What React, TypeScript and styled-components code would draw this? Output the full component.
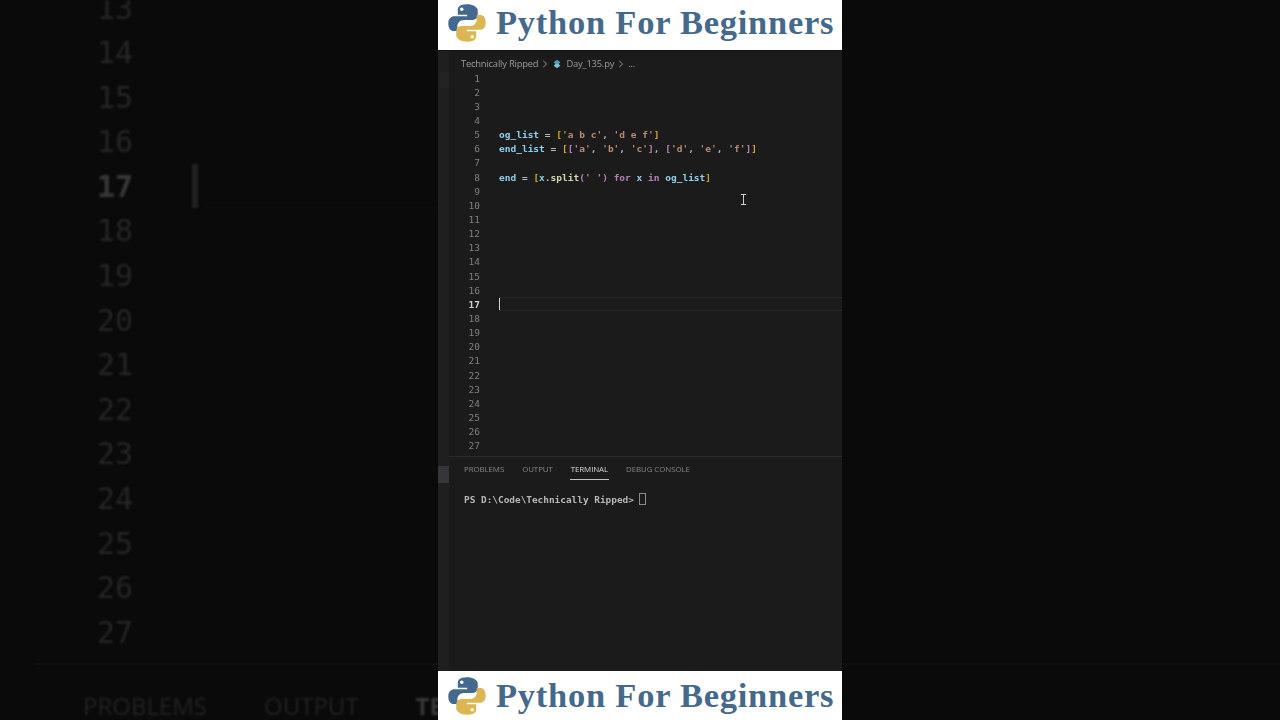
import React from 'react';
import styled, { createGlobalStyle } from 'styled-components';

const vars = {
  mono: '"DejaVu Sans Mono", "Liberation Mono", monospace',
  ui: '"Open Sans", "Liberation Sans", sans-serif',
  serif: '"Liberation Serif", serif',
  blue: '#8fcfee',
  gold: '#d0a230',
  pink: '#b97fb5',
  orange: '#b98a72',
  plain: '#b8b8b8',
};

const GlobalStyle = createGlobalStyle`
  html, body {
    margin: 0;
    height: 100%;
    background: #0a0a0a;
  }
  #root {
    height: 100%;
  }
`;

const Page = styled.main`
  display: flex;
  width: 1280px;
  height: 720px;
  overflow: hidden;
  background: #0a0a0a;
`;

// blurred, darkened copy of the video either side of the short
const Backdrop = styled.aside`
  display: flex;
  flex-direction: column;
  flex: 0 0 438px;
  height: 720px;
  overflow: hidden;
`;

const GhostBody = styled.div`
  display: flex;
  flex-direction: column;
  height: 663px;
  flex: none;
  overflow: hidden;
  margin-left: 36px;
  filter: blur(1.1px);
`;

const GhostRow = styled.div<{ $first?: boolean }>`
  display: flex;
  align-items: center;
  flex: none;
  height: 44.6px;
  margin-top: ${(p) => (p.$first ? '-14.3px' : '0')};
`;

const GhostNumber = styled.span<{ $active?: boolean }>`
  flex: 0 0 36px;
  margin-left: 61px;
  font: ${(p) => (p.$active ? 700 : 400)} 30px ${vars.mono};
  letter-spacing: -0.1px;
  color: ${(p) => (p.$active ? '#383838' : '#262626')};
`;

const GhostCaret = styled.span`
  width: 6px;
  height: 44px;
  margin-left: 59px;
  background: #222222;
`;

const GhostLine = styled.span`
  flex: 1;
  height: 44px;
  margin-left: 6px;
  box-sizing: border-box;
  border-top: 1px solid #0d0d0d;
  border-bottom: 1px solid #111111;
`;

const GhostDivider = styled.div<{ $inset?: boolean }>`
  flex: none;
  height: 2px;
  margin-left: ${(p) => (p.$inset ? '36px' : '0')};
  background: #111111;
`;

const GhostTabs = styled.div`
  display: flex;
  align-items: center;
  gap: 57px;
  height: 55px;
  padding: 24px 0 0 83px;
  white-space: nowrap;
  filter: blur(1.1px);
  font: 400 24px ${vars.ui};
  color: #222222;
`;

const GhostTab = styled.span<{ $active?: boolean }>`
  flex: none;
  font-weight: ${(p) => (p.$active ? 700 : 400)};
  color: ${(p) => (p.$active ? '#383838' : '#222222')};
`;

const Screen = styled.section`
  position: relative;
  display: flex;
  flex-direction: column;
  flex: 0 0 404px;
  height: 720px;
  overflow: hidden;
  background: #1b1b1b;
`;

const Banner = styled.header<{ $bottom?: boolean }>`
  display: flex;
  align-items: center;
  flex: none;
  gap: 10px;
  box-sizing: border-box;
  height: ${(p) => (p.$bottom ? '49px' : '51px')};
  padding: ${(p) => (p.$bottom ? '0 0 0 10px' : '0 0 5px 10px')};
  background: #ffffff;
  border-bottom: ${(p) => (p.$bottom ? 'none' : '1px solid #111111')};
`;

const BannerTitle = styled.h1`
  margin: 0;
  font: 700 34.5px ${vars.serif};
  letter-spacing: 0.75px;
  white-space: nowrap;
  color: #44698b;
`;

const Workbench = styled.div`
  display: flex;
  flex: 1;
  min-height: 0;
`;

const ActivityBar = styled.nav`
  display: flex;
  flex-direction: column;
  flex: 0 0 11px;
  background: #1f1f1f;
`;

const ActivityItem = styled.span<{ $lit?: boolean }>`
  height: ${(p) => (p.$lit ? '17px' : '16px')};
  margin-top: ${(p) => (p.$lit ? '378px' : '21px')};
  background: ${(p) => (p.$lit ? '#36363a' : '#232323')};
`;

const Main = styled.div`
  display: flex;
  flex-direction: column;
  flex: 1;
  min-width: 0;
`;

const Breadcrumbs = styled.div`
  display: flex;
  align-items: center;
  flex: none;
  gap: 4px;
  height: 20px;
  padding: 5px 0 0 12px;
  box-sizing: border-box;
  font: 400 9.4px ${vars.ui};
  letter-spacing: -0.2px;
  color: #9c9c9c;
  filter: blur(0.45px);
`;

const Editor = styled.div`
  flex: none;
  height: 385px;
  filter: blur(0.5px);
`;

const Line = styled.div`
  display: flex;
  align-items: center;
  height: 14.15px;
`;

const LineNumber = styled.span<{ $active?: boolean }>`
  flex: 0 0 31px;
  text-align: right;
  font: ${(p) => (p.$active ? 700 : 400)} 9.5px ${vars.mono};
  color: ${(p) => (p.$active ? '#d0d0d0' : '#808080')};
`;

const Code = styled.code`
  margin-left: 19px;
  white-space: pre;
  font: 700 9.52px ${vars.mono};
  color: ${vars.plain};
`;

const Tok = styled.span<{ $c: string }>`
  color: ${(p) => p.$c};
`;

const CurrentLine = styled.div`
  display: flex;
  flex: 1;
  align-self: stretch;
  margin-left: 19px;
  box-sizing: border-box;
  border-top: 1px solid #252525;
  border-bottom: 1px solid #252525;
`;

const TextCaret = styled.span`
  width: 1px;
  background: #d0d0d0;
`;

const Panel = styled.div`
  display: flex;
  flex-direction: column;
  flex: 1;
  border-top: 1px solid #2a2a2a;
`;

const PanelTabs = styled.div`
  display: flex;
  flex: none;
  gap: 16px;
  height: 23px;
  padding-left: 14px;
  filter: blur(0.4px);
`;

const PanelTab = styled.span<{ $active?: boolean }>`
  display: flex;
  align-items: center;
  box-sizing: border-box;
  padding: 1px 1px 0;
  font: 400 7.9px ${vars.ui};
  letter-spacing: -0.08px;
  color: ${(p) => (p.$active ? '#d8d8d8' : '#858585')};
  border-bottom: 1px solid ${(p) => (p.$active ? '#c0c0c0' : 'transparent')};
`;

const Terminal = styled.div`
  display: flex;
  align-items: center;
  gap: 5px;
  margin-top: 12px;
  padding-left: 15px;
  height: 14px;
  font: 700 9.42px ${vars.mono};
  color: #b8b8b8;
  white-space: pre;
  filter: blur(0.4px);
`;

const TerminalCursor = styled.span`
  width: 7px;
  height: 12px;
  box-sizing: border-box;
  border: 1px solid #8a8a8a;
`;

// the mouse pointer sits on top of the editor
const MouseCursor = styled.svg`
  position: absolute;
  left: 302px;
  top: 194px;
`;

const PythonLogo: React.FC<{ size: number }> = ({ size }) => {
  const half =
    'M11.8.2C6.9.2 6.2 2.2 6.2 3.8V6.8h5.9v.9H4C2 7.7.2 9 .2 12.2c0 3.4 1.5 4.9 3.4 4.9h2.3v-3c0-2.2 1.9-4 4.1-4h5.6c1.8 0 3.2-1.5 3.2-3.3V3.6C18 1.8 16 .2 11.8.2z';
  return (
    <svg width={size} height={size} viewBox="0 0 24 24" style={{ flex: 'none' }}>
      <path d={half} fill="#44698f" />
      <circle cx="8.7" cy="3.3" r="1.1" fill="#ffffff" />
      <g transform="rotate(180 12 12)">
        <path d={half} fill="#dcb653" />
        <circle cx="8.7" cy="3.3" r="1.1" fill="#ffffff" />
      </g>
    </svg>
  );
};

const Chevron: React.FC = () => (
  <svg width="6" height="8" viewBox="0 0 6 8" fill="none" stroke="#a0a0a0" strokeWidth="0.9">
    <path d="M1.2 .8 4.6 4 1.2 7.2" />
  </svg>
);

const PyFileIcon: React.FC = () => (
  <svg width="10" height="10" viewBox="0 0 24 24">
    <path d="M12 2 4 8l4 4h8l4-4z" fill="#4f9fc4" />
    <path d="M4 16l4-4h8l4 4-8 6z" fill="#7cc4dd" />
  </svg>
);

const { blue, gold, pink, orange } = vars;

const code: Record<number, React.ReactNode> = {
  5: (
    <>
      <Tok $c={blue}>og_list</Tok> = <Tok $c={gold}>[</Tok>
      <Tok $c={orange}>'a b c'</Tok>, <Tok $c={orange}>'d e f'</Tok>
      <Tok $c={gold}>]</Tok>
    </>
  ),
  6: (
    <>
      <Tok $c={blue}>end_list</Tok> = <Tok $c={gold}>[</Tok>
      <Tok $c={pink}>[</Tok>
      <Tok $c={orange}>'a'</Tok>, <Tok $c={orange}>'b'</Tok>, <Tok $c={orange}>'c'</Tok>
      <Tok $c={pink}>]</Tok>, <Tok $c={pink}>[</Tok>
      <Tok $c={orange}>'d'</Tok>, <Tok $c={orange}>'e'</Tok>, <Tok $c={orange}>'f'</Tok>
      <Tok $c={pink}>]</Tok>
      <Tok $c={gold}>]</Tok>
    </>
  ),
  8: (
    <>
      <Tok $c={blue}>end</Tok> = <Tok $c={gold}>[</Tok>
      <Tok $c={blue}>x</Tok>.<Tok $c="#d6d6b0">split</Tok>
      <Tok $c={pink}>(</Tok>
      <Tok $c={orange}>' '</Tok>
      <Tok $c={pink}>)</Tok> <Tok $c={pink}>for</Tok> <Tok $c={blue}>x</Tok>{' '}
      <Tok $c={pink}>in</Tok> <Tok $c={blue}>og_list</Tok>
      <Tok $c={gold}>]</Tok>
    </>
  ),
};

const lineNumbers = Array.from({ length: 27 }, (_, i) => i + 1);
const ghostNumbers = Array.from({ length: 15 }, (_, i) => i + 13);

const Banners: React.FC<{ bottom?: boolean }> = ({ bottom }) => (
  <Banner $bottom={bottom}>
    <PythonLogo size={38} />
    <BannerTitle>Python For Beginners</BannerTitle>
  </Banner>
);

const App: React.FC = () => {
  return (
    <Page>
      <GlobalStyle />

      <Backdrop>
        <GhostBody>
          {ghostNumbers.map((n) => (
            <GhostRow key={n} $first={n === 13}>
              <GhostNumber $active={n === 17}>{n}</GhostNumber>
              {n === 17 && (
                <>
                  <GhostCaret />
                  <GhostLine />
                </>
              )}
            </GhostRow>
          ))}
        </GhostBody>
        <GhostDivider $inset />
        <GhostTabs>
          <GhostTab>PROBLEMS</GhostTab>
          <GhostTab>OUTPUT</GhostTab>
          <GhostTab $active>TERMINAL</GhostTab>
        </GhostTabs>
      </Backdrop>

      <Screen>
        <Banners />
        <Workbench>
          <ActivityBar>
            <ActivityItem />
            <ActivityItem $lit />
          </ActivityBar>
          <Main>
            <Breadcrumbs>
              <span>Technically Ripped</span>
              <Chevron />
              <PyFileIcon />
              <span>Day_135.py</span>
              <Chevron />
              <span>...</span>
            </Breadcrumbs>
            <Editor>
              {lineNumbers.map((n) => (
                <Line key={n}>
                  <LineNumber $active={n === 17}>{n}</LineNumber>
                  {code[n] && <Code>{code[n]}</Code>}
                  {n === 17 && (
                    <CurrentLine>
                      <TextCaret />
                    </CurrentLine>
                  )}
                </Line>
              ))}
            </Editor>
            <Panel>
              <PanelTabs>
                <PanelTab>PROBLEMS</PanelTab>
                <PanelTab>OUTPUT</PanelTab>
                <PanelTab $active>TERMINAL</PanelTab>
                <PanelTab>DEBUG CONSOLE</PanelTab>
              </PanelTabs>
              <Terminal>
                PS D:\Code\Technically Ripped&gt;
                <TerminalCursor />
              </Terminal>
            </Panel>
          </Main>
        </Workbench>
        <Banners bottom />
        <MouseCursor width="7" height="11" viewBox="0 0 7 11" fill="none" stroke="#cfcfcf">
          <path d="M1 .5h5M1 10.5h5M3.5 .5v10" />
        </MouseCursor>
      </Screen>

      <Backdrop>
        <GhostBody />
        <GhostDivider />
      </Backdrop>
    </Page>
  );
};

export default App;
